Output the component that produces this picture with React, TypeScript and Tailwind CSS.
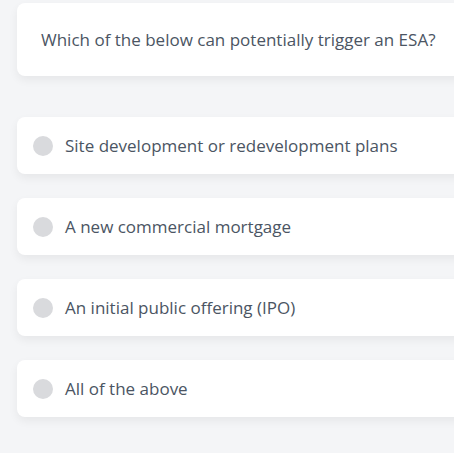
import React from "react";

const options = [
  "Site development or redevelopment plans",
  "A new commercial mortgage",
  "An initial public offering (IPO)",
  "All of the above",
];

export default function App() {
  return (
    <div
      className="w-[454px] h-[453px] overflow-hidden bg-[#f4f5f7]"
      style={{ fontFamily: '"Open Sans", "Noto Sans", sans-serif' }}
    >
      <div className="w-[560px] pl-[17px] pt-[3px]">
        <div className="h-[73px] rounded-lg bg-white shadow-[0_4px_10px_rgba(0,0,0,0.06)] flex items-center px-6">
          <span className="text-[17px] text-[#4b5563]">
            Which of the below can potentially trigger an ESA?
          </span>
        </div>
        <div className="mt-[41px] flex flex-col gap-[24px]">
          {options.map((o) => (
            <div
              key={o}
              className="h-[57px] rounded-lg bg-white shadow-[0_4px_10px_rgba(0,0,0,0.06)] flex items-center pl-4 gap-3"
            >
              <span className="w-5 h-5 rounded-full bg-[#d9dadd] shrink-0" />
              <span className="text-[17px] text-[#4b5563]">{o}</span>
            </div>
          ))}
        </div>
      </div>
    </div>
  );
}
